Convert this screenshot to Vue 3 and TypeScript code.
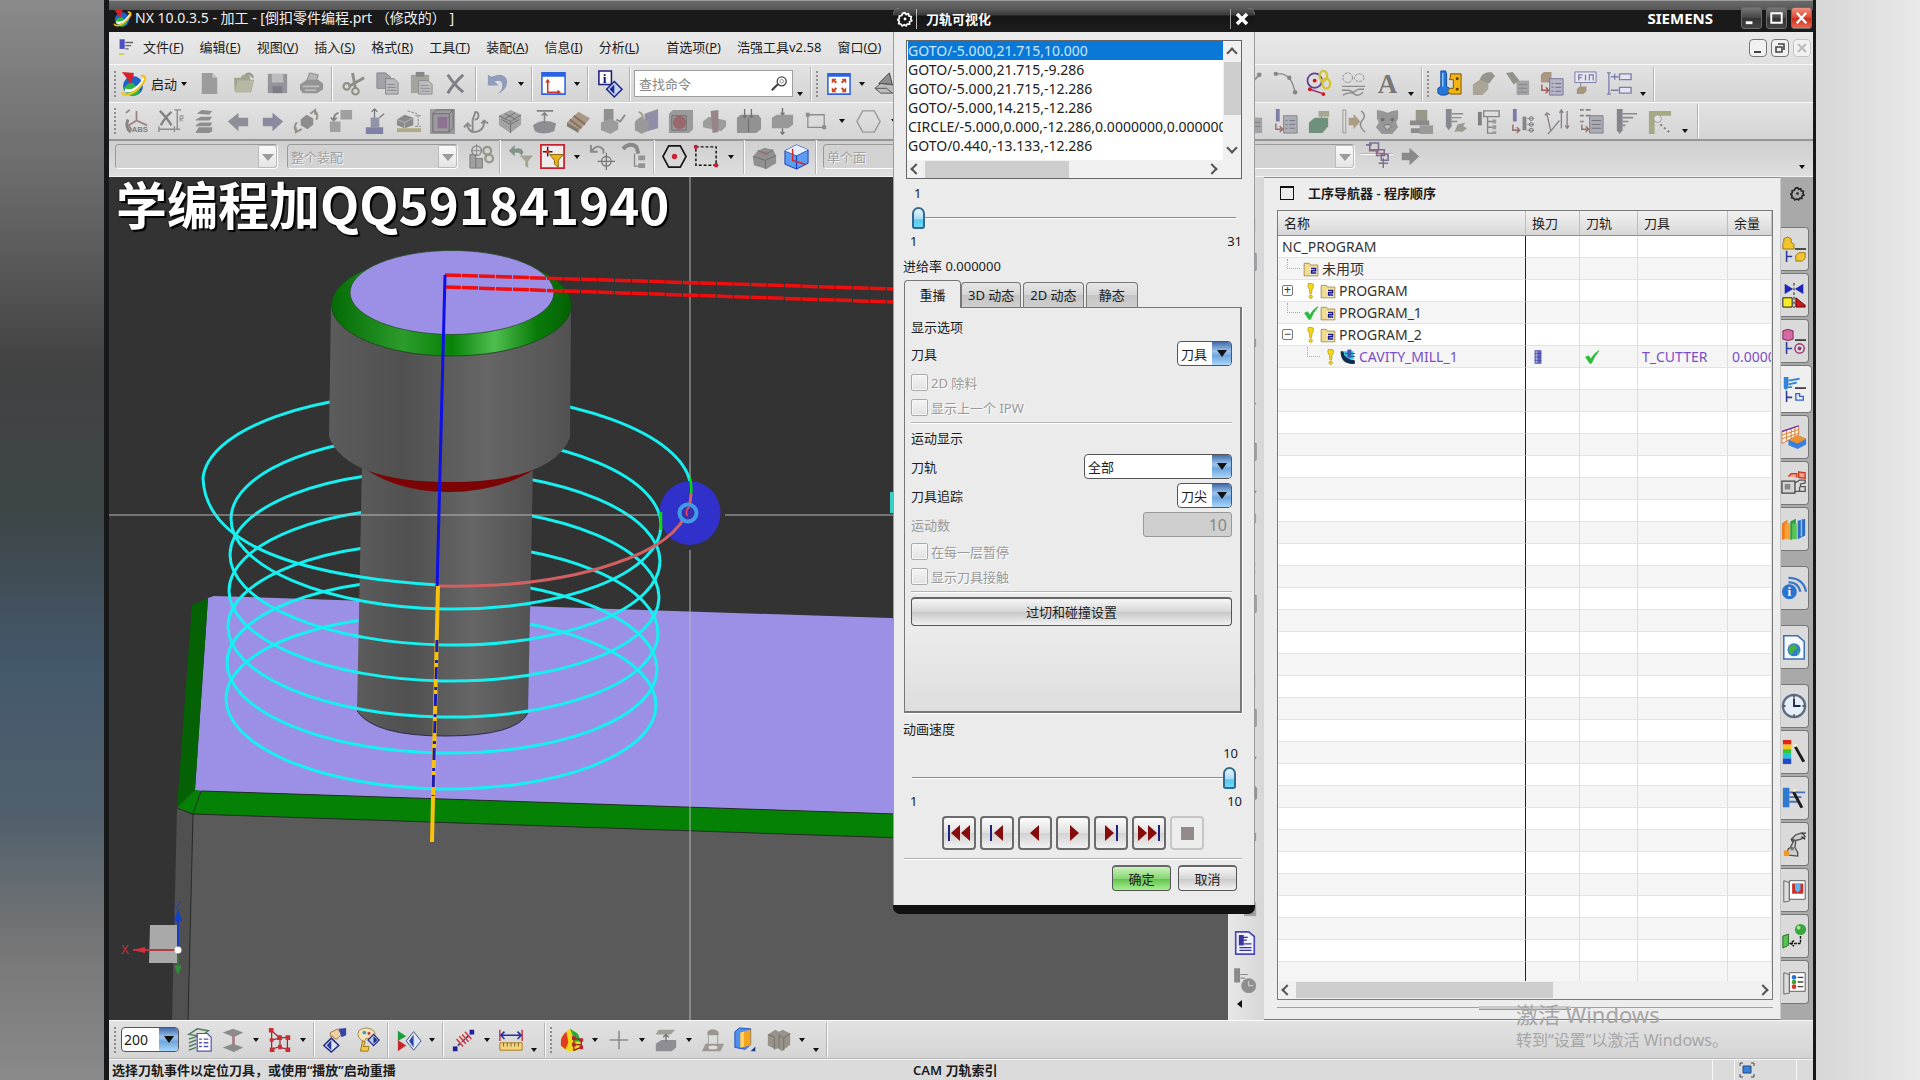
<script setup lang="ts">
import { ref } from 'vue'

interface Menu { text: string; key?: string; spaced?: boolean }
interface TreeRow { level: number; label: string; box?: '+' | '-'; mark?: string; icon?: string; purple?: boolean }
interface SideTab { icon: string; label: string; gap?: boolean; active?: boolean }

const menus: Menu[] = [
  { text: '文件', key: 'F' }, { text: '编辑', key: 'E' }, { text: '视图', key: 'V' },
  { text: '插入', key: 'S' }, { text: '格式', key: 'R' }, { text: '工具', key: 'T' },
  { text: '装配', key: 'A' }, { text: '信息', key: 'I' }, { text: '分析', key: 'L' },
  { text: '首选项', key: 'P', spaced: true }, { text: '浩强工具v2.58' }, { text: '窗口', key: 'O' },
]

// Toolbar notation: ":" grip, "|" separator, "v" drop-down arrow, "w" low overflow arrow, "~" stretch under the dialog
const bar1 = ': start file open save print | cut copy paste delete | undo v | csyswin v | info | search w | : fit v shade ~ line arc circles sketch letter w | : bolt grab pull boxlist fin dims w |'.split(' ')
const bar2 = ': abs xr stack left right rotate squares pillar boxdim cube anchor mesh lift slab drill corner pocket cross split slice rect v hex v ~ mill toollist greenbox mirror bear layers wrench tree toolpath axes treelist speed cornercut w |'.split(' ')
const bar3a = 'asm | refilter filter v undopt tree2 | hexpt dashrect v | greycube bluecube |'.split(' ')
const bar4 = 'sheets hourglass v nodes v | hand palette | play v | ribs v ruler w | : rainbow v plus v section v shadow orange books v w |'.split(' ')
const sideTools = 'mill toollist tree layers stack speed treelist axes squares tree2 toollist greenbox mill treelist axes split layers tree pull'.split(' ')

const gotoLines = [
  'GOTO/-5.000,21.715,10.000',
  'GOTO/-5.000,21.715,-9.286',
  'GOTO/-5.000,21.715,-12.286',
  'GOTO/-5.000,14.215,-12.286',
  'CIRCLE/-5.000,0.000,-12.286,0.0000000,0.0000000,1.0000000',
  'GOTO/0.440,-13.133,-12.286',
]
const selected = ref(0)
const frame = ref(1)
const speed = ref(10)

const tabs = ['重播', '3D 动态', '2D 动态', '静态']
const activeTab = ref(0)

const treeRows: TreeRow[] = [
  { level: 0, label: 'NC_PROGRAM' },
  { level: 1, label: '未用项', icon: 'folder' },
  { level: 1, label: 'PROGRAM', box: '+', mark: 'bang', icon: 'folder' },
  { level: 1, label: 'PROGRAM_1', mark: 'check', icon: 'folder' },
  { level: 1, label: 'PROGRAM_2', box: '-', mark: 'bang', icon: 'folder' },
  { level: 2, label: 'CAVITY_MILL_1', mark: 'bang', icon: 'cavity', purple: true },
]
const emptyRows = 28

const sideTabs: SideTab[] = [
  { icon: 'tAsm', label: '装配导航器' }, { icon: 'tCons', label: '约束导航器' },
  { icon: 'tPart', label: '部件导航器' }, { icon: 'tOper', label: '工序导航器', active: true },
  { icon: 'tMach', label: '加工特征' }, { icon: 'tTool', label: '机床导航器' },
  { icon: 'tLib', label: '重用库' }, { icon: 'tInfo', label: 'HD3D 工具', gap: true },
  { icon: 'tWeb', label: 'Web 浏览器', gap: true }, { icon: 'tClock', label: '历史记录', gap: true },
  { icon: 'tColor', label: '系统材料' }, { icon: 'tWiz', label: '加工向导' },
  { icon: 'tRobot', label: '角色' }, { icon: 'tScene', label: '系统场景' },
  { icon: 'tGreen', label: '流程' }, { icon: 'tRole', label: '可视化' },
]

const players = [
  { label: '后退到开头', d: 'first', off: false }, { label: '后退一步', d: 'prev', off: false },
  { label: '反向播放', d: 'back', off: false }, { label: '播放', d: 'fwd', off: false },
  { label: '前进一步', d: 'next', off: false }, { label: '前进到结尾', d: 'last', off: false },
  { label: '停止', d: 'stop', off: true },
]

const ringTops = [522, 558, 594, 630, 666, 702]

const icons: Record<string, string> = {
  nx: '<circle cx="14" cy="16" r="10" fill="#1d63c8"/><path d="M5 18q4-6 9-5l7 8q-3 6-9 5-5-2-7-8z" fill="#2fb545"/><path d="M6 20q10 4 20-12" fill="none" stroke="#fff" stroke-width="3"/><path d="M3 22q2 5 10 1T26 10q1-5-4-4" fill="none" stroke="#f1c31c" stroke-width="2.4"/><path d="M3 2l12 1-3 11z" fill="#d8202a"/>',
  file: '<path d="M6 3h11l5 5v17H6z" fill="#9c9c9c"/><path d="M17 3v5h5" fill="#c4c4c4"/>',
  open: '<path d="M4 8h7l2-3h8v5l4 0-3 13H5z" fill="#a3a592"/><path d="M8 11h17l-4 12H5z" fill="#b7b8a4"/><path d="M16 5q5-4 8 3" fill="none" stroke="#8f9285" stroke-width="2"/>',
  save: '<path d="M4 4h20v20H4z" fill="#94949a"/><path d="M8 4h12v9H8z" fill="#bdbdc1"/><path d="M9 17h10v7H9z" fill="#7d7d84"/>',
  print: '<path d="M9 11l3-8 9 2-2 7z" fill="#b4b4b4" stroke="#8c8c8c"/><path d="M2 15l7-5h12l5 4v6l-6 4H5l-3-4z" fill="#949494"/><path d="M5 17h17M7 21h12" stroke="#bebebe" stroke-width="1.6"/>',
  cut: '<path d="M9 17L25 8M16 19L13 3" stroke="#8e8e86" stroke-width="3"/><circle cx="7" cy="17" r="3.4" fill="none" stroke="#8e8e86" stroke-width="2.2"/><circle cx="16" cy="22" r="3.4" fill="none" stroke="#8e8e86" stroke-width="2.2"/>',
  copy: '<path d="M3 3h9l5 4v12H3z" fill="#a2a2a8" stroke="#858588"/><path d="M12 9h9l4 4v12H12z" fill="#b9b9be" stroke="#858588"/><path d="M14 15h8M14 18h9M14 21h9" stroke="#858588"/>',
  paste: '<path d="M3 5h19v19H3z" fill="#a4a49e"/><path d="M8 2h9v5H8z" fill="#878787"/><path d="M11 11h10l4 4v10H11z" fill="#bdbdbf" stroke="#8b8b8b"/><path d="M13 16h8M13 19h10M13 22h10" stroke="#8b8b8b"/>',
  delete: '<path d="M6 5q7 11 16 18M22 5Q12 14 6 24" stroke="#7f7f85" stroke-width="3" fill="none"/>',
  undo: '<path d="M4 5v11h11l-4-4q8-3 8 4 0 5-5 9 10-4 10-13-2-11-16-5z" fill="#8f9cba"/>',
  csyswin: '<path d="M2 3h24v22H2z" fill="#fff" stroke="#2f62e0" stroke-width="1.6"/><path d="M2 3h24v4H2z" fill="#2a62e6"/><path d="M8 11v12h12" fill="none" stroke="#c63a28" stroke-width="1.6"/><path d="M5.500 13L8 9l2.500 4zM18 20.500l4 2.500-4 2.500z" fill="#d42f1c"/>',
  info: '<path d="M3 1h13v14H3z" fill="#fff" stroke="#1d1d78" stroke-width="1.6"/><text x="7" y="13" font-family="Liberation Serif,serif" font-weight="bold" font-size="14" fill="#15156b">i</text><path d="M19 12l8 8-8 8-8-8z" fill="#c9d2f1" stroke="#1b2a8d" stroke-width="1.600"/><path d="M19 15v10l-5-5z" fill="#1b2a8d"/>',
  fit: '<path d="M3 4h23v21H3z" fill="#fff" stroke="#2f62e0" stroke-width="1.6"/><path d="M3 4h23v3H3z" fill="#2a62e6"/><path d="M7 9h5l-1.500 1.500 2 2-1.500 1.500-2-2L7 14zM22 9h-5l1.500 1.500-2 2 1.500 1.500 2-2L22 14zM7 23h5l-1.500-1.500 2-2-1.500-1.500-2 2L7 18zM22 23h-5l1.500-1.500-2-2 1.500-1.500 2 2L22 18z" fill="#d2431e"/>',
  shade: '<path d="M6 14L17 3l3 12z" fill="#8d8d8d" stroke="#444"/><path d="M2 19l6-5 17 2 2 5-7 3H8z" fill="#bbb" stroke="#555"/><path d="M2 19h12l6 5" fill="none" stroke="#555"/>',
  line: '<path d="M4 24L22 5" stroke="#909090" stroke-width="2"/><circle cx="22" cy="5" r="2.500" fill="#8a8a8a"/><circle cx="4" cy="24" r="2.500" fill="#8a8a8a"/>',
  arc: '<path d="M4 4h6q11 2 14 20" fill="none" stroke="#8b8b8b" stroke-width="1.5"/><circle cx="4" cy="4" r="2.300" fill="#858585"/><circle cx="18" cy="8" r="2.300" fill="#858585"/><circle cx="24" cy="23" r="2.300" fill="#858585"/>',
  circles: '<circle cx="9" cy="11" r="7.500" fill="none" stroke="#603a9d" stroke-width="1.800"/><circle cx="9" cy="11" r="2" fill="#c11"/><path d="M4 20l15 5" stroke="#9b2a66" stroke-width="1.500"/><circle cx="4" cy="20" r="2" fill="#d21c1c"/><circle cx="18" cy="25" r="2" fill="#d21c1c"/><ellipse cx="18" cy="6" rx="4" ry="5" fill="none" stroke="#d3c52e" stroke-width="2.400"/><ellipse cx="21" cy="14" rx="4" ry="5" fill="none" stroke="#d3c52e" stroke-width="2.400"/>',
  sketch: '<circle cx="8" cy="8" r="5" fill="none" stroke="#8c8c8c" stroke-dasharray="3 1"/><ellipse cx="20" cy="8" rx="5" ry="4" fill="none" stroke="#8c8c8c" stroke-dasharray="3 1"/><path d="M2 17h24M2 21h7l5 2 5-3 6 0M3 26q8-4 12-1t9-2" fill="none" stroke="#8c8c8c" stroke-width="1.400"/>',
  letter: '<text x="4" y="24" font-family="Liberation Serif,serif" font-size="28" font-weight="bold" fill="#777">A</text>',
  bolt: '<path d="M5 1h5l1 3v13l3 2v5l-4 2H5l-3-2v-5l3-2V2z" fill="#2377dd" stroke="#114b9c"/><path d="M7 3v14" stroke="#8ec8ff" stroke-width="1.500"/><path d="M15 4h11v21H15l-3-3 2-3h4v-9h-4l1-3z" fill="#f2b516" stroke="#7a5205"/><circle cx="22" cy="9" r="1.500" fill="#5c3c00"/><circle cx="22" cy="20" r="1.500" fill="#5c3c00"/>',
  grab: '<path d="M3 15l7-5h9v10l-6 6H3z" fill="#a8a596"/><path d="M10 10q2-8 12-8l4 4-6 8z" fill="#96948c"/>',
  pull: '<path d="M13 11h13v15H13z" fill="#a4a4a8"/><path d="M15 15h9M15 19h9M15 23h9" stroke="#828288"/><path d="M2 3l7-1 7 9-6 4z" fill="#92928a"/>',
  boxlist: '<path d="M3 5l3-3h8v8l-3 3H3z" fill="#aa9781"/><path d="M12 9h14v17H12z" fill="#b5b5c6" stroke="#77779c"/><path d="M14 14h2M18 14h6M14 18h2M18 18h6M14 22h2M18 22h6" stroke="#6b6b92"/><path d="M4 15v6h6M8 18l3 3-3 3" fill="none" stroke="#a05b5b" stroke-width="1.500"/>',
  fin: '<path d="M3 2h22v11H3z" fill="#e6e6ee" stroke="#7b7baa"/><path d="M7 11V5h4M7 8h3M14 5v6M18 11V5h4v6" fill="none" stroke="#7b7baa" stroke-width="1.300"/><path d="M9 13v5" stroke="#888"/><path d="M5 20l3-3h7v5l-3 3H5z" fill="#a5957c"/>',
  dims: '<path d="M3 3v22M1 3h4M1 25h4M5 7h8M5 21h8M9 4v6" stroke="#7e7eae" stroke-width="1.400" fill="none"/><path d="M14 4h12v6H14zM14 18h12v6H14z" fill="#e4e4ee" stroke="#7e7eae" stroke-width="1.400"/>',
  abs: '<path d="M3 5l4-3M14 3v10l11 5M14 13L6 18l3 5" fill="none" stroke="#9c8080" stroke-width="1.800"/><path d="M5 12q-3 9 3 13" fill="none" stroke="#858585" stroke-width="3"/><text x="9" y="25" font-family="Liberation Sans" font-size="8" font-weight="bold" fill="#808080">ABS</text>',
  xr: '<path d="M3 3q8 8 12 15M15 4Q8 10 4 18" stroke="#828282" stroke-width="2.400" fill="none"/><path d="M2 22h16M2 19v6M18 19v6M21 2v20M18 2h7M19 22h5" stroke="#8a8a8a" stroke-width="1.400"/><path d="M24 14V8h3v3h-3l3 3" fill="none" stroke="#8a8a8a"/>',
  stack: '<path d="M6 6l5-4 11 1-3 4zM5 12l5-3h12l-3 4H5zM5 18l4-3h13l-2 4H5zM5 25l3-5h14v4l-3 2H5z" fill="#8e8e8e"/>',
  left: '<path d="M3 14L14 5v5h10v9H14v5z" fill="#8e8e96"/>',
  right: '<path d="M25 14L14 5v5H4v9h10v5z" fill="#8a8aa0"/>',
  rotate: '<path d="M8 12l6-5 7 4v6l-6 5-7-4z" fill="#8c8c8c"/><path d="M18 6l5-4v5M23 3q4 5 1 9M9 22l-6 3v-5M3 24q-3-4 1-9" fill="none" stroke="#969088" stroke-width="2"/>',
  squares: '<path d="M14 2h12v10H14zM3 14h11v11H3z" fill="#a0a0a0"/><path d="M12 5q-5 1-5 7M4 10l3 3 3-3" fill="none" stroke="#828282" stroke-width="1.800"/>',
  pillar: '<path d="M5 20h18v7H5z" fill="#8080a4"/><path d="M10 10h9v10h-9z" fill="#9292a8"/><path d="M14 10V1M11 4l3-3 3 3M19 10l5-4" fill="none" stroke="#777" stroke-width="1.300"/>',
  boxdim: '<path d="M2 12l8-5 9 3v8l-9 3-8-3z" fill="#8a8a8a"/><path d="M2 12l8 3 9-5M10 15v6" stroke="#b5b5b5" fill="none"/><path d="M2 21h25v4H2z" fill="#b0aa84"/><path d="M13 3l10 3M24 7v12M21 8h6M21 19h6" stroke="#8b8b8b" stroke-dasharray="3 1" fill="none"/>',
  cube: '<path d="M1 1h26v26H1z" fill="#9d9aa0"/><path d="M4 6l4-4h17v19l-4 4H4zM4 6h17v19M21 6l4-4" fill="none" stroke="#6b6b6b"/><path d="M9 9h10v12H9z" fill="#8d7292"/>',
  anchor: '<path d="M12 12q4 0 4-4t-3-4l-3 8v12M4 17q2 8 8 8 10-1 10-11M1 20l4-4 3 3M19 16l3-3 4 3" fill="none" stroke="#8a8a8a" stroke-width="2"/>',
  mesh: '<path d="M2 8l12-6 11 5v10l-11 9-12-8z" fill="#a3a3a3"/><path d="M2 8l12 6 11-7M14 14v12M5 12l9 5 9-5M8 6l12 6M19 5L8 11" stroke="#6f6f6f" fill="none"/>',
  lift: '<path d="M2 18q10-8 24-2l-2 8q-12 5-20 0z" fill="#8d8d93"/><path d="M6 3h17M14 15V5M11 8l3-3 3 3" stroke="#828282" stroke-width="1.600" fill="none"/>',
  slab: '<path d="M2 15L14 4l12 7-12 13z" fill="#a79a84"/><path d="M9 8l12 9M5 12l12 9" stroke="#8c6c5e" stroke-width="2"/><path d="M2 15l12 7v4L2 19z" fill="#7f7a70"/>',
  drill: '<path d="M5 1h10v14H5z" fill="#909090"/><path d="M2 15l10-4 8 4v7l-8 5-10-4z" fill="#9c9c9c"/><path d="M18 12l4 2 5-7" fill="none" stroke="#8a8a8a" stroke-width="2"/>',
  corner: '<path d="M12 6l14-5v20l-14 4z" fill="#8f90a8"/><path d="M2 14l6-5 8 5v9l-7 4-7-4z" fill="#999"/><path d="M6 4q5 2 4 8" stroke="#a39c84" stroke-width="2" fill="none"/>',
  pocket: '<path d="M2 6l4-4h21v20l-4 4H2z" fill="#9a9a9a"/><path d="M5 8h15v15H5z" fill="none" stroke="#6f6f6f"/><circle cx="13" cy="15" r="7" fill="#97696f"/>',
  cross: '<path d="M2 14l6-5 18 4v6l-5 5-19-4z" fill="#9c9c9c"/><path d="M10 3l8-1v23l-6 1z" fill="#96868a"/>',
  split: '<path d="M2 10l4-3h18l3 4v11l-5 4H2z" fill="#929292"/><path d="M10 1v9M17 1v9M8 8l2 2 2-2M15 8l2 2 2-2M14 11v14" stroke="#747474" stroke-width="1.400" fill="none"/>',
  slice: '<path d="M3 10l5-3h17v10l-5 4H3z" fill="#999"/><path d="M14 0v7M12 5l2 2 2-2M14 21v7M12 25l2 2 2-2" stroke="#777" stroke-width="1.500" fill="none"/>',
  rect: '<path d="M5 7h17v13H5z" fill="none" stroke="#8d8d8d" stroke-width="1.300"/><path d="M3 5h4v4H3zM20 18h4v4h-4z" fill="#8d8d8d"/>',
  hex: '<path d="M8 3h12l6 11-6 11H8L2 14z" fill="none" stroke="#9a9a9a" stroke-width="1.500"/>',
  mill: '<path d="M4 2h5v14H4z" fill="#8484a0"/><path d="M12 10h13v16H12z" fill="#a2a2a8"/><path d="M14 15h9M14 19h9" stroke="#808086"/>',
  toollist: '<path d="M4 1h4v13H4z" fill="#7e7ea8"/><path d="M12 8h14v18H12z" fill="#adadb6" stroke="#83838c"/><path d="M14 13h2M18 13h6M14 17h2M18 17h6M14 21h2M18 21h6" stroke="#75757e"/><path d="M4 16v6h6M8 19l3 3-3 3" fill="none" stroke="#986e6e" stroke-width="1.500"/>',
  greenbox: '<path d="M3 15l6-5h14v9l-6 7H3z" fill="#70907e"/><path d="M13 3h11v6H13z" fill="#a9a594"/><path d="M16 9v5" stroke="#888"/>',
  mirror: '<path d="M3 2h3v24H3z" fill="none" stroke="#999"/><path d="M9 10h5V6l7 8-7 8v-4H9z" fill="#ab9d84"/><path d="M22 3q6 5 1 10t3 12" fill="none" stroke="#8a8a8a" stroke-width="1.500"/>',
  bear: '<path d="M3 2l6 1 5 2 5-2 6-1v9l-2 4 2 5-6 7H8l-6-7 3-5-2-4z" fill="#979797"/><circle cx="9" cy="12" r="2" fill="#707070"/><circle cx="19" cy="12" r="2" fill="#707070"/><path d="M10 19q4-4 8 0l-4 4z" fill="#bdbdbd" stroke="#707070"/>',
  layers: '<path d="M8 2h12v13H8z" fill="#98988a"/><path d="M2 13h20v5H2zM3 21h12v5H3z" fill="#8a8a8a"/><path d="M12 18h14v9H12z" fill="#9a9a98"/>',
  wrench: '<path d="M4 1h6v18l-3 4-3-4z" fill="#888890"/><path d="M10 6h12M10 10h10M10 14h6" stroke="#8c8c8c" stroke-width="1.500"/><path d="M13 25l3-8 8-2-2 4 4 2-5 4-4-1z" fill="#9a9a92"/>',
  tree: '<path d="M2 4h4v14H2z" fill="#808080"/><path d="M8 3h16v6H8zM12 9v17h6M12 14h5M12 20h5" fill="none" stroke="#858585" stroke-width="1.400"/><path d="M17 12h4v4h-4zM17 18h4v4h-4zM17 24h4v3h-4z" fill="#9a9a9a"/>',
  toolpath: '<path d="M3 1h4v13H3z" fill="#7c7ca6"/><path d="M3 17v6h6M7 20l3 3-3 3" fill="none" stroke="#946c6c" stroke-width="1.500"/><path d="M13 9h4v14h-4z" fill="#84848c"/><path d="M18 11h7M18 17h7M18 23h7" stroke="#85858c"/><circle cx="22" cy="11" r="2" fill="none" stroke="#777"/><circle cx="22" cy="17" r="2" fill="none" stroke="#777"/><circle cx="22" cy="23" r="2" fill="none" stroke="#777"/>',
  axes: '<path d="M3 6l4 18M7 24L16 13M7 24l-3 3M18 3v18M24 3v18M16 5l2-3 2 3M22 18l2 3 2-3M1 8l2-3 3 2" fill="none" stroke="#8c8088" stroke-width="1.400"/>',
  treelist: '<path d="M2 2h4M2 8h4M2 14h4M8 2h5M8 8h5" stroke="#858585" stroke-width="1.800"/><path d="M12 8h14v18H12z" fill="#acacb6" stroke="#80808a"/><path d="M14 13h10M14 17h10M14 21h10" stroke="#74747e"/><path d="M4 17v5h6M8 19l3 3-3 3" fill="none" stroke="#986e6e" stroke-width="1.500"/>',
  speed: '<path d="M5 1h6v22l-3 4-3-4z" fill="#84848c"/><path d="M11 6h15M11 10h11M11 14h6M11 18h3" stroke="#8a8a8a" stroke-width="1.700"/>',
  cornercut: '<path d="M3 3h23v5H14l-5 4v15H3z" fill="#a6a984"/><circle cx="12" cy="11" r="4" fill="#e0e0e0" stroke="#999"/><path d="M15 17l9 8" stroke="#777" stroke-dasharray="2 3" stroke-width="2"/>',
  asm: '<path d="M3 12h6v14H3zM9 16h7v10H9z" fill="#a0a0a0" stroke="#7d7d7d"/><circle cx="10" cy="8" r="5" fill="none" stroke="#888" stroke-width="1.400"/><path d="M10 1v12M4 8h11" stroke="#888"/><circle cx="21" cy="8" r="4" fill="none" stroke="#96968a" stroke-width="2.400"/><circle cx="23" cy="16" r="4" fill="none" stroke="#96968a" stroke-width="2.400"/>',
  refilter: '<path d="M2 8l6-6v4q8-2 9 4l-2 3q-2-4-7-3v4z" fill="#82948c"/><path d="M13 13h14l-5 6v7l-3-2v-5z" fill="#a6a392"/>',
  filter: '<path d="M2 2h24v24H2z" fill="#f1ecec" stroke="#c8202c" stroke-width="1.800"/><path d="M9 4v10M4 9h10" stroke="#222" stroke-width="1.500"/><circle cx="9" cy="9" r="2" fill="#c33"/><path d="M11 12h14l-5 6v7l-4-3v-4z" fill="#eab41e" stroke="#8a6205"/>',
  undopt: '<path d="M2 2v7h7M3 8q6-8 12-1v4" fill="none" stroke="#8a8a8a" stroke-width="2"/><circle cx="18" cy="19" r="5" fill="none" stroke="#777" stroke-width="1.300"/><path d="M18 10v18M9 19h18" stroke="#777" stroke-width="1.300"/>',
  tree2: '<path d="M2 6q7-7 14-2l2 7" fill="none" stroke="#888" stroke-width="4"/><path d="M14 11v13h5" fill="none" stroke="#888" stroke-width="1.400"/><path d="M18 13h7v5h-7zM18 21h7v5h-7z" fill="#949494"/>',
  hexpt: '<path d="M8 3h12l6 11-6 11H8L2 14z" fill="none" stroke="#161616" stroke-width="1.700"/><circle cx="14" cy="14" r="2.800" fill="#cf2430"/>',
  dashrect: '<path d="M3 4h21v19H3z" fill="none" stroke="#111" stroke-width="1.500" stroke-dasharray="3 2"/><circle cx="3" cy="4" r="2.300" fill="#c22036"/><circle cx="24" cy="23" r="2.300" fill="#c22036"/>',
  greycube: '<path d="M2 14l5-6 7-3 9 2 3 6v8l-10 6-13-4z" fill="#909090"/><path d="M2 14l13 4 11-5M15 18v9M7 8l10 3 6-4" fill="none" stroke="#6f6f6f"/><path d="M9 9l8 3" stroke="#a06f6f" stroke-width="1.500"/>',
  bluecube: '<path d="M2 8l12-6 12 5v14l-12 6-12-5z" fill="#5c9df2" stroke="#1d3fb5"/><path d="M2 8l12 5 12-6M14 13v14" fill="none" stroke="#1d3fb5" stroke-width="1.300"/><path d="M2 8l12-6 12 5-12 6z" fill="#fff" opacity=".85"/><path d="M10 6v12l13 4" fill="none" stroke="#d62727" stroke-width="1.500"/>',
  spline: '<path d="M2 4h6M6 2h9v8H6zM13 9h8v6h-8zM18 14h7v6h-7z" fill="none" stroke="#7c6c94" stroke-width="1.600"/><path d="M5 9h9v4h8" fill="none" stroke="#a26868" stroke-width="1.500"/><path d="M20 18v10M15 23h10" stroke="#777" stroke-width="1.500"/>',
  go: '<path d="M24 14L14 5v5H6v8h8v5z" fill="#8a8a8a"/>',
  sheets: '<path d="M2 8l9-6 12 2-8 6zM2 13l9-3M2 17l8-3M2 21l8-3M2 25l8-3" fill="none" stroke="#4c7c5c" stroke-width="1.500"/><path d="M11 7h11l4 4v15H11z" fill="#fff" stroke="#5550b0" stroke-width="1.300"/><path d="M13 13h3M18 13h5M13 17h3M18 17h5M13 21h3M18 21h5" stroke="#5550b0" stroke-width="1.500"/>',
  hourglass: '<path d="M3 6l11-4 11 4-10 5zM3 22l11-4 11 4-10 5z" fill="#8b8b8b"/><path d="M13 9h3v10h-3z" fill="#a77f83"/>',
  nodes: '<path d="M5 4v20M5 4l9 8M5 24l9-3M14 12v10l8 2M14 12l8-1v13M5 14l9-2" fill="none" stroke="#8f2930" stroke-width="1.300"/><path d="M2 1h5v5H2zM11 9h5v5h-5zM20 9h5v5h-5zM3 12h4v4H3zM3 22h5v5H3zM12 19h4v5h-4zM20 22h5v5h-5z" fill="#c92c34"/>',
  hand: '<path d="M10 12l8 8-8 7-8-7z" fill="#dfe5fa" stroke="#1f2c80" stroke-width="1.600"/><path d="M10 14v11l-5-5z" fill="#2b3c9e"/><path d="M9 6l8-4 4 6-5 5q-4 0-4-3l-3 0z" fill="#f0cf9d" stroke="#99764a"/><path d="M18 2l8-1v8l-5 2z" fill="#3445a8"/>',
  palette: '<path d="M4 4q8-6 16 0 4 5-2 9l-6-1-2 4q-9-4-6-12z" fill="#f7e3bb" stroke="#a28340"/><circle cx="10" cy="6" r="2" fill="#2d9fd8"/><circle cx="15" cy="7" r="1.600" fill="#d33"/><path d="M20 8l6 6-6 6-6-6z" fill="#b9c5ef" stroke="#1f2c80" stroke-width="1.300"/><path d="M20 10v8l4-4z" fill="#1f2c80"/><path d="M8 15l3 1-2 5h6l-1 5H6z" fill="#f1c94a" stroke="#9a7718"/>',
  play: '<path d="M2 4l9 6-9 5z" fill="#1b9e3a"/><path d="M2 14l9 6-9 6z" fill="#c6272d"/><path d="M19 5l8 10-8 10-8-10z" fill="#dfe8fa" stroke="#3a4b80"/><path d="M19 8v14l-5-7z" fill="#2d49a6"/>',
  ribs: '<path d="M3 24L25 4" stroke="#1d2298" stroke-width="1.500" stroke-dasharray="4 2"/><path d="M6 13l7 8M9 10l7 8M12 8l7 8M15 5l7 8" stroke="#d5343a" stroke-width="1.600"/><path d="M2 21h5v5H2zM20 3h5v5h-5z" fill="#1d2298"/>',
  ruler: '<path d="M2 3v12M26 3v12" stroke="#d5343a" stroke-width="1.600"/><path d="M3 9h22M7 5L3 9l4 4M21 5l4 4-4 4" fill="none" stroke="#1f2fa6" stroke-width="1.600"/><path d="M2 17h24v8H2z" fill="#f3d57c" stroke="#a57a24"/><path d="M6 17v4M10 17v4M14 17v4M18 17v4M22 17v4" stroke="#805c14"/>',
  rainbow: '<path d="M2 20Q1 8 12 2l8 5 4 8-4 10q-12 4-18-5z" fill="#f2d51d"/><path d="M12 2l8 5 4 8-7 1z" fill="#2eaa36"/><path d="M2 20Q1 10 8 5l2 12-3 7z" fill="#e23a1d"/><path d="M16 12v13l8-3M16 12l8 2v8M16 19h8" fill="none" stroke="#97262b" stroke-width="1.400"/><path d="M14 10h4v4h-4zM22 12h4v4h-4zM14 17h4v4h-4zM22 20h4v4h-4z" fill="#b02a30"/>',
  plus: '<path d="M14 4v20M4 14h20" stroke="#8c8c8c" stroke-width="1.700"/>',
  section: '<path d="M6 3h18l-5 5H3z" fill="#9f9f96"/><path d="M3 18l6-4h16v8l-5 4H3z" fill="#8e8e94"/><path d="M14 16V8M11 11l3-3 3 3" fill="none" stroke="#777" stroke-width="1.500"/>',
  shadow: '<path d="M8 5q5-5 12 0v4H8z" fill="#9a968c"/><path d="M9 9v11M19 9v11" stroke="#9a9a9a"/><path d="M6 18h20l-4 8H2z" fill="#9e9a92"/><ellipse cx="14" cy="22" rx="5" ry="2" fill="#ddd"/>',
  orange: '<path d="M2 5l5-4 12 1v17l-6 5-11-2z" fill="#4f8ff0" stroke="#1e4fb8"/><path d="M8 6l11-3v17l-11 2z" fill="#f8a41a"/><path d="M8 6l4-1v16l-4 1z" fill="#ffd36b"/><path d="M24 21v5h-5z" fill="#1b3a86"/>',
  books: '<path d="M2 8l8-5 4 2 4-2 8 4v12l-9 7-4-3-3 1-8-4z" fill="#97938a"/><path d="M2 8l7 3v13M14 8v15M14 9l5 3v13M26 7l-7 5" fill="none" stroke="#7b776e" stroke-width="1.200"/>',
  doc: '<path d="M4 2h14l6 5v19H4z" fill="#f1f1fb" stroke="#4b48b4" stroke-width="1.800"/><path d="M8 6h4v10H8zM12 8h5M12 11h4" fill="#39379b" stroke="#39379b" stroke-width="1.300"/><path d="M13 15h8M8 19h13M8 22h13" stroke="#39379b" stroke-width="1.400"/>',
  toolclock: '<path d="M3 1h5v14H3zM9 7h8M9 11h5" fill="#8a8a8a" stroke="#8a8a8a" stroke-width="1.300"/><circle cx="18" cy="19" r="8" fill="#8e8e8e"/><path d="M18 14v5h5" fill="none" stroke="#c8c8c8" stroke-width="1.300"/>',
  folder: '<path d="M2 4h9l2 3h13v19H2z" fill="#f0dd92" stroke="#9b8a4c" stroke-width="1.500"/><path d="M12 11h12v13H12z" fill="#eee" /><path d="M14 13h8v4h-7v4h8" fill="none" stroke="#1a1a8c" stroke-width="2.600"/>',
  bang: '<path d="M9 1q5-2 9 1 2 4-2 9l-1 8h-3l-1-8q-4-5-2-10z" fill="#f5d619" stroke="#a1890d"/><circle cx="13.500" cy="24" r="3" fill="#f5d619" stroke="#a1890d"/>',
  check: '<path d="M3 14l5-2 4 6Q17 8 26 3q-9 11-13 22h-3z" fill="#2dbb3a" stroke="#2dbb3a" stroke-width="1.500"/>',
  cavity: '<path d="M1 4h5q1 13 20 16v6Q1 28 1 4z" fill="#122c4c"/><path d="M6 4h18v15Q8 18 6 4z" fill="#35c8e4"/><path d="M13 1h7v14h-7z" fill="#3d55b4"/><path d="M9 8h4M20 8h6M20 13h6" stroke="#1b2f85" stroke-width="1.500"/>',
  cutter: '<path d="M8 2h12v24H8z" fill="#5f63b8"/><path d="M10 4h3v20h-3z" fill="#a9ace8"/><path d="M8 8h12M8 14h12M8 20h12" stroke="#3a3e93"/>',
  tAsm: '<path d="M3 3l4-2 4 2v4l3 2v5H2V8l1-1z" fill="#f1c52e" stroke="#99750c"/><path d="M16 21l3-3h7v6l-3 3h-7z" fill="#f1c52e" stroke="#99750c"/><path d="M15 14h12" stroke="#111" stroke-width="1.500"/><path d="M6 16v12M6 22h6" stroke="#2c3d9c" stroke-width="1.700" fill="none"/>',
  tCons: '<path d="M4 2v11l9-5.500zM24 2v11l-9-5.500z" fill="#1c25b8"/><path d="M14 1v27" stroke="#111" stroke-dasharray="3 2"/><path d="M2 17h10v10H2z" fill="#f6ec27" stroke="#111"/><path d="M16 17l10 8v2H16z" fill="#c51b20" stroke="#600"/>',
  tPart: '<path d="M2 3q5-3 11 0v9q-5 3-11 0z" fill="#d36aa2" stroke="#7a2456"/><path d="M15 13h12" stroke="#111" stroke-width="1.500"/><path d="M6 15v13M6 22h6" stroke="#2c3d9c" stroke-width="1.700"/><circle cx="20" cy="22" r="5" fill="none" stroke="#9c2e70" stroke-width="1.500"/><circle cx="20" cy="22" r="2" fill="#9c2e70"/>',
  tOper: '<path d="M3 1h5v12l-3 2-2-2z" fill="#3285d8"/><path d="M8 5l12-2M8 9l9-2M8 12h4" stroke="#3285d8" stroke-width="2"/><path d="M15 13h12" stroke="#111" stroke-width="1.500"/><path d="M6 16v12M6 23h6" stroke="#2c3d9c" stroke-width="1.700"/><path d="M16 19h4v3h4v4h-8z" fill="none" stroke="#2c62c8" stroke-width="1.400"/>',
  tMach: '<path d="M1 8l18-6v10L1 21z" fill="#fff2df" stroke="#d77b38"/><path d="M1 12l18-6M1 16l18-6M6 6v13M11 5v12M15 3v12" stroke="#d77b38"/><path d="M1 8l18-6" stroke="#6f3cc0" stroke-width="1.600"/><path d="M8 17l10-5 9 4v6l-9 5-10-4z" fill="#3a80e0"/><path d="M8 17l10-5 9 4-9 5z" fill="#f0922a"/>',
  tTool: '<path d="M1 12h14v13H1z" fill="#d5d5d5" stroke="#444" stroke-width="1.400"/><path d="M4 15h6v6H4z" fill="#888"/><path d="M8 7l3-3h6v4M19 2l7 1v6l-7-1z" fill="#f2a08a" stroke="#c5351c" stroke-width="1.400"/><path d="M15 14l5-3h6v3l-5 1v3h5v5h-11M20 18v5" stroke="#555" stroke-width="1.400" fill="none"/>',
  tLib: '<path d="M1 8l6-4v19l-6 3z" fill="#ef7d1c"/><path d="M4 8h6v17H4z" fill="#f8a13c"/><path d="M10 6l6-3v20l-6 3z" fill="#2c9e3c"/><path d="M12 8h5v17h-5z" fill="#58c25a"/><path d="M18 5l8-2v18l-8 4z" fill="#2b6cc6"/><path d="M22 4v18" stroke="#9bc4f5" stroke-width="1.500"/>',
  tInfo: '<circle cx="9" cy="18" r="8" fill="#2a73cf"/><text x="7" y="23" font-family="Liberation Serif,serif" font-weight="bold" font-size="14" fill="#fff">i</text><path d="M8 8q10-1 13 10M8 3q16 0 19 15" fill="none" stroke="#3f78c2" stroke-width="2.400"/>',
  tWeb: '<path d="M3 2h15l7 6v19H3z" fill="#f7faff" stroke="#3d6fb8" stroke-width="1.600"/><circle cx="14" cy="17" r="7" fill="#2f7fd0"/><path d="M9 13l6-2 3 4-4 3-3 5-3-4zM17 19l3-1-2 4z" fill="#45b04a"/>',
  tClock: '<circle cx="14" cy="14" r="12" fill="#e6eefa" stroke="#5e6c80" stroke-width="2.400"/><path d="M14 6v8h7" fill="none" stroke="#1d2a4a" stroke-width="2"/><path d="M14 3v2M14 23v2M3 14h2M23 14h2" stroke="#333" stroke-width="1.500"/>',
  tColor: '<path d="M2 1h9v5H2z" fill="#e2231a"/><path d="M2 6h9v5H2z" fill="#f6c51a"/><path d="M2 11h9v5H2z" fill="#39c43a"/><path d="M2 16h9v5H2z" fill="#20c3d8"/><path d="M2 21h9v6H2z" fill="#1f49d0"/><path d="M14 9l9 16 3-1-9-16z" fill="#1b1b1b"/><path d="M12 2l2 4 4-1-3 4" fill="#fff6b0"/>',
  tWiz: '<path d="M2 3h7v21H2z" fill="#2e7ad0"/><path d="M9 8h17M9 13h13M9 18h9" stroke="#4a6fb4" stroke-width="2"/><path d="M12 8l9 17 3-1-9-17z" fill="#1b1b1b"/><path d="M11 1l2 4 4-1-3 4" fill="#fff6b0"/>',
  tRobot: '<path d="M8 26q-3-6 2-8l3-6-2-3 5-5 7-2 3 4-5 3-5 1-1 8 3 5v4z" fill="#cfcfcf" stroke="#4d4d4d" stroke-width="1.400"/><circle cx="13" cy="10" r="2" fill="#555"/><circle cx="12" cy="19" r="2" fill="#777"/><path d="M3 21h6v6H3z" fill="#ee9a28"/><path d="M22 6l4 3M22 3l5-1" stroke="#444" stroke-width="1.500"/>',
  tScene: '<path d="M3 4l6 2v20l-6 1z" fill="#ddd" stroke="#666"/><path d="M9 4h17v20H9z" fill="#fff" stroke="#555"/><path d="M12 7h12v11H12z" fill="#ce2b22"/><path d="M15 7h6v7l-3 3-3-3z" fill="#5fb3ef"/>',
  tGreen: '<circle cx="21" cy="7" r="6" fill="#3aa53a"/><circle cx="19" cy="5" r="2" fill="#a9e59b"/><path d="M2 14l6-2v12l-6 3z" fill="#5bc256" stroke="#1d6c1d"/><path d="M21 14v8H11M14 19l-4 3 4 3" fill="none" stroke="#111" stroke-width="1.500" stroke-dasharray="3 1"/>',
  tRole: '<path d="M3 4l6 2v20l-6 1z" fill="#ddd" stroke="#666"/><path d="M9 4h17v20H9z" fill="#fff" stroke="#555"/><circle cx="14" cy="9" r="2.500" fill="#2e6fd6"/><circle cx="14" cy="14" r="2.500" fill="#34a83a"/><circle cx="14" cy="19" r="2.500" fill="#d5342c"/><path d="M18 9h6M18 14h6M18 19h6" stroke="#444" stroke-width="1.400"/>',
  gear: '<path d="M14 3l2 3 4-1 1 4 4 1-1 4 2 3-4 2v4l-4 0-2 3-3-2-4 2-2-3-4-1 1-4-3-3 3-2 0-4 4-1 2-4z" fill="none" stroke="currentColor" stroke-width="3"/><circle cx="14" cy="14" r="2.500" fill="currentColor"/>',
  first: '<path d="M4 6v16" stroke="#1d2180" stroke-width="2"/><path d="M15 6v16l-9-8zM25 6v16l-9-8z" fill="#860c0c"/>',
  prev: '<path d="M8 6v16" stroke="#1d2180" stroke-width="2"/><path d="M20 6v16l-9-8z" fill="#860c0c"/>',
  back: '<path d="M18 6v16l-9-8z" fill="#860c0c"/>',
  fwd: '<path d="M11 6v16l9-8z" fill="#860c0c"/>',
  next: '<path d="M8 6v16l9-8z" fill="#860c0c"/><path d="M20 6v16" stroke="#1d2180" stroke-width="2"/>',
  last: '<path d="M3 6v16l9-8zM13 6v16l9-8z" fill="#860c0c"/><path d="M24 6v16" stroke="#1d2180" stroke-width="2"/>',
  stop: '<path d="M8 8h13v13H8z" fill="#948a8c"/>',
  tool: '<path d="M4 2h8v15H4z" fill="#4c50c0"/><path d="M13 7h12M13 12h9M13 17h5" stroke="#666" stroke-width="2"/><path d="M3 25h8" stroke="#d8cf4c" stroke-width="3"/>',
}
</script>

<template>
  <div class="desktop">
    <main class="window">
      <header class="titlebar">
        <svg class="logo" viewBox="0 0 28 28" v-html="icons.nx" />
        <h1>NX 10.0.3.5 - 加工 - [倒扣零件编程.prt （修改的） ]</h1>
        <strong class="brand">SIEMENS</strong>
        <div class="winbtns">
          <button aria-label="最小化"><svg viewBox="0 0 20 20"><path d="M4 14h7v3H4z" fill="#fff" /></svg></button>
          <button aria-label="最大化"><svg viewBox="0 0 20 20"><path d="M4.500 5.500h11v10h-11z" fill="none" stroke="#fff" stroke-width="2" /></svg></button>
          <button class="red" aria-label="关闭"><svg viewBox="0 0 20 20"><path d="M5 5l10 11M15 5L5 16" stroke="#fff" stroke-width="2.500" /></svg></button>
        </div>
      </header>

      <nav class="menubar">
        <svg class="menuicon" viewBox="0 0 28 28" v-html="icons.tool" />
        <button v-for="m in menus" :key="m.text" :class="{ spaced: m.spaced }">{{ m.text }}<template v-if="m.key">(<u>{{ m.key }}</u>)</template></button>
        <div class="mdi">
          <button aria-label="最小化子窗口"><svg viewBox="0 0 16 16"><path d="M4 11h7v2H4z" fill="#444" /></svg></button>
          <button aria-label="还原子窗口"><svg viewBox="0 0 16 16"><path d="M4 7h6v5H4zM6 4h6v6" fill="none" stroke="#444" stroke-width="1.600" /></svg></button>
          <button aria-label="关闭子窗口" disabled><svg viewBox="0 0 16 16"><path d="M4 4l8 8M12 4l-8 8" stroke="#bbb" stroke-width="2" /></svg></button>
        </div>
      </nav>

      <div v-for="(bar, b) in [bar1, bar2]" :key="b" class="bar" :class="{ second: b === 1 }">
        <template v-for="(t, i) in bar" :key="i">
          <i v-if="t === ':'" class="grip" />
          <i v-else-if="t === '|'" class="sep" />
          <i v-else-if="t === '~'" class="behind" />
          <button v-else-if="t === 'v' || t === 'w'" class="drop" :class="{ low: t === 'w' }" aria-label="更多"><i /></button>
          <button v-else-if="t === 'start'" class="start"><svg viewBox="0 0 28 28" v-html="icons.nx" />启动<i /></button>
          <label v-else-if="t === 'search'" class="search">
            <input type="text" placeholder="查找命令" aria-label="查找命令">
            <svg viewBox="0 0 20 20"><circle cx="13" cy="7" r="5" fill="none" stroke="#444" stroke-width="1.500" /><circle cx="13" cy="7" r="2" fill="none" stroke="#888" /><path d="M9 10l-7 7" stroke="#444" stroke-width="2.500" /></svg>
          </label>
          <button v-else class="tool" :aria-label="t"><svg viewBox="0 0 28 28" v-html="icons[t]" /></button>
        </template>
      </div>

      <div class="bar third">
        <span class="dimsel type"><select disabled aria-label="类型过滤器"><option></option></select><i /></span>
        <span class="dimsel scope"><select disabled aria-label="选择范围"><option>整个装配</option></select><i /></span>
        <template v-for="(t, i) in bar3a" :key="i">
          <i v-if="t === '|'" class="sep" />
          <button v-else-if="t === 'v'" class="drop" aria-label="更多"><i /></button>
          <button v-else class="tool" :aria-label="t"><svg viewBox="0 0 28 28" v-html="icons[t]" /></button>
        </template>
        <span class="dimsel face"><select disabled aria-label="面规则"><option>单个面</option></select><i /></span>
        <button class="tool wide" aria-label="spline"><svg viewBox="0 0 28 28" v-html="icons.spline" /></button>
        <button class="tool" aria-label="go"><svg viewBox="0 0 28 28" v-html="icons.go" /></button>
        <button class="drop low end" aria-label="更多"><i /></button>
      </div>

      <section class="work">
        <div class="viewport">
          <svg class="scene" viewBox="109 177 1119 843" preserveAspectRatio="xMinYMin slice">
            <defs>
              <linearGradient id="steel"><stop offset="0" stop-color="#5c5c5c" /><stop offset=".3" stop-color="#505050" /><stop offset=".65" stop-color="#666" /><stop offset="1" stop-color="#525252" /></linearGradient>
              <linearGradient id="rim"><stop offset="0" stop-color="#046b04" /><stop offset=".3" stop-color="#2c9c2c" /><stop offset=".5" stop-color="#078307" /><stop offset=".68" stop-color="#4fbe4f" /><stop offset=".85" stop-color="#0a7d0a" /><stop offset="1" stop-color="#046004" /></linearGradient>
              <clipPath id="front"><path d="M356 475H533L529 740H356z" /></clipPath>
            </defs>
            <path d="M109 177h1119v843H109z" fill="#333" />
            <path d="M177 808l16 7-5 205h-16z" fill="#505050" />
            <path d="M193 814L1228 849v171H188z" fill="#5a5a5a" />
            <path d="M208 598l6-2 1014 33v196L201 791l-6-1z" fill="#9b90e6" />
            <path d="M208 598L192 605 177 808l18-18z" fill="#046204" />
            <path d="M195 790l6 1L1228 825v24L193 814l-16-6z" fill="#058205" />
            <path d="M201 791l-8 23-16-6M193 814L1228 849M201 791L1228 825M193 814l-5 206" fill="none" stroke="#272c27" />
            <g fill="none" stroke="#16f0f0" stroke-width="3">
              <ellipse v-for="(y, i) in ringTops" :key="y" :cx="446 - i" :cy="y" rx="215" ry="87" :transform="`rotate(1 446 ${y})`" />
              <path d="M690 482A244 93 1 0 0 203 478Q206 570 438 585" />
            </g>
            <path d="M362 465L357 711Q374 736 445 736T528 713L533 465z" fill="url(#steel)" />
            <path d="M357 711Q374 736 445 736T528 713" fill="none" stroke="#2e2a50" />
            <path d="M352 459q38 33 96 33t99-31z" fill="#7c0404" />
            <path d="M331 305L329 437q18 45 120 45t121-44l1-133z" fill="url(#steel)" />
            <ellipse cx="451.500" cy="305" rx="120" ry="51" fill="url(#rim)" stroke="#1c421c" stroke-width=".8" />
            <ellipse cx="452" cy="292.500" rx="102" ry="42" fill="#9b90e6" stroke="#274a27" stroke-width=".8" />
            <g clip-path="url(#front)" fill="none" stroke="#16f0f0" stroke-width="3">
              <path v-for="(y, i) in ringTops" :key="y" :d="`M${231 - i} ${y - 4}A215 87 1 0 0 ${661 - i} ${y + 4}`" />
              <path d="M203 478Q206 570 438 585" />
            </g>
            <path d="M690 177V481M690 550V1020M109 515H658M725 515H893" stroke="#b8b8b8" fill="none" />
            <ellipse cx="690" cy="513" rx="30.500" ry="32" fill="#3030cb" />
            <path d="M690 478q2 8 1 16M661 512v18" stroke="#0bd80b" stroke-width="2.500" fill="none" />
            <path d="M691 494q-1 45-78 70-70 24-175 22" fill="none" stroke="#d25f62" stroke-width="3" />
            <circle cx="688" cy="513" r="8.500" fill="#3a2fae" stroke="#3f9be6" stroke-width="4" />
            <path d="M690 507q-5 2-3 9" stroke="#e2405a" stroke-width="2" fill="none" />
            <path d="M445 275L893 289M445 287L893 302" stroke="#f00d0d" stroke-width="3.500" stroke-dasharray="16 1" />
            <path d="M445 275L437 590" stroke="#0f0fe8" stroke-width="3" />
            <path d="M438 586L432 842" stroke="#f8c10c" stroke-width="4" />
            <path d="M437 640L433 796" stroke="#1c1cb4" stroke-width="3" stroke-dasharray="12 8 3 4" />
            <path d="M890 492h4v21h-4z" fill="#3bd0c6" />
            <path d="M150 925h27v38h-28z" fill="#a9a9a9" />
            <path d="M133 950h45" stroke="#b23a44" stroke-width="2" /><path d="M133 950l12-3v6z" fill="#d9303c" />
            <path d="M178 950v-36" stroke="#1440c8" stroke-width="2" /><path d="M174 921l4-12 4 12z" fill="#1440c8" />
            <path d="M178 955v18M175 966l3 8 3-8z" stroke="#2f8f3a" fill="#2f8f3a" />
            <circle cx="178" cy="950" r="3.500" fill="#fff" />
            <text x="121" y="954" font-family="Liberation Sans" font-size="12" fill="#c23440">X</text>
            <text x="174" y="910" font-family="Liberation Sans" font-size="12" fill="#2a46b8">Z</text>
          </svg>
          <p class="overlay">学编程加QQ591841940</p>
        </div>

        <div class="vbar">
          <button v-for="(t, i) in sideTools" :key="i" :aria-label="t"><svg viewBox="0 0 28 28" v-html="icons[t]" /></button>
          <button aria-label="车间文档"><svg viewBox="0 0 28 28" v-html="icons.doc" /></button>
          <button aria-label="时间"><svg viewBox="0 0 28 28" v-html="icons.toolclock" /></button>
          <i class="tri" />
        </div>

        <aside class="navigator">
          <h2><i />工序导航器 - 程序顺序</h2>
          <div class="grid">
            <div class="rows">
              <table>
                <colgroup><col><col class="c2"><col class="c3"><col class="c4"><col class="c5"></colgroup>
                <thead><tr><th>名称</th><th>换刀</th><th>刀轨</th><th>刀具</th><th>余量</th></tr></thead>
                <tbody>
                  <tr v-for="r in treeRows" :key="r.label" :class="{ purple: r.purple }">
                    <td>
                      <div class="cell" :class="'lv' + r.level">
                        <b v-if="r.box" class="box">{{ r.box === '+' ? '+' : '−' }}</b>
                        <i v-else-if="r.level" class="dots" />
                        <svg v-if="r.mark" class="mark" viewBox="0 0 28 28" v-html="icons[r.mark]" />
                        <svg v-if="r.icon" viewBox="0 0 28 28" v-html="icons[r.icon]" />
                        <span>{{ r.label }}</span>
                      </div>
                    </td>
                    <td><svg v-if="r.purple" viewBox="0 0 28 28" v-html="icons.cutter" /></td>
                    <td><svg v-if="r.purple" viewBox="0 0 28 28" v-html="icons.check" /></td>
                    <td>{{ r.purple ? 'T_CUTTER' : '' }}</td>
                    <td>{{ r.purple ? '0.0000' : '' }}</td>
                  </tr>
                  <tr v-for="n in emptyRows" :key="n"><td /><td /><td /><td /><td /></tr>
                </tbody>
              </table>
            </div>
            <div class="hscroll"><span class="chev l" /><i class="thumb" /><span class="chev r" /></div>
          </div>
          <div class="splitline"><i /></div>
        </aside>

        <div class="tabstrip">
          <button class="gearbtn" aria-label="资源条选项"><svg viewBox="0 0 28 28" v-html="icons.gear" /></button>
          <button v-for="s in sideTabs" :key="s.icon" class="stab" :class="{ gap: s.gap, active: s.active }" :aria-label="s.label"><svg viewBox="0 0 28 28" v-html="icons[s.icon]" /></button>
        </div>
      </section>

      <div class="bar bottom">
        <i class="grip" />
        <span class="sel zoomsel"><select aria-label="缩放"><option>200</option></select><b><i /></b></span>
        <template v-for="(t, i) in bar4" :key="i">
          <i v-if="t === ':'" class="grip" />
          <i v-else-if="t === '|'" class="sep" />
          <button v-else-if="t === 'v' || t === 'w'" class="drop" :class="{ low: t === 'w' }" aria-label="更多"><i /></button>
          <button v-else class="tool" :aria-label="t"><svg viewBox="0 0 28 28" v-html="icons[t]" /></button>
        </template>
      </div>

      <footer class="status">
        <span class="msg">选择刀轨事件以定位刀具，或使用“播放”启动重播</span>
        <span class="cue">CAM 刀轨索引</span>
        <i class="cellbox small" />
        <span class="cellbox"><svg viewBox="0 0 16 16"><path d="M1 4V1h3M12 1h3v3M15 12v3h-3M4 15H1v-3" fill="none" stroke="#444" /><path d="M4 4h8v7H4z" fill="#3a7fd8" stroke="#244c86" /></svg></span>
        <i class="cellbox last" />
      </footer>
    </main>

    <section class="dialog" role="dialog" aria-label="刀轨可视化">
      <header>
        <svg viewBox="0 0 28 28" v-html="icons.gear" />
        <h2>刀轨可视化</h2>
        <button aria-label="关闭"><svg viewBox="0 0 16 16"><path d="M3 3l10 10M13 3L3 13" stroke="#fff" stroke-width="3.500" /></svg></button>
      </header>
      <div class="body">
        <div class="listbox">
          <ul role="listbox" aria-label="刀轨事件">
            <li v-for="(g, i) in gotoLines" :key="i" role="option" :aria-selected="i === selected" :class="{ on: i === selected }" @click="selected = i">{{ g }}</li>
          </ul>
          <div class="vscroll"><span class="chev u" /><i class="thumb" /><span class="chev d" /></div>
          <div class="hscroll"><span class="chev l" /><i class="thumb" /><span class="chev r" /></div>
        </div>
        <p class="val">{{ frame }}</p>
        <input v-model="frame" type="range" min="1" max="31" aria-label="运动">
        <p class="ends"><span>1</span><span>31</span></p>
        <p class="feed">进给率 0.000000</p>
        <div class="tabs" role="tablist">
          <button v-for="(t, i) in tabs" :key="t" role="tab" :class="{ on: i === activeTab }" @click="activeTab = i">{{ t }}</button>
        </div>
        <div class="panel">
          <h3>显示选项</h3>
          <div class="row"><label for="s1">刀具</label><span class="sel short"><select id="s1"><option>刀具</option></select><b><i /></b></span></div>
          <label class="chk first"><input type="checkbox" disabled>2D 除料</label>
          <label class="chk"><input type="checkbox" disabled>显示上一个 IPW</label>
          <hr>
          <h3 class="mid">运动显示</h3>
          <div class="row"><label for="s2">刀轨</label><span class="sel long"><select id="s2"><option>全部</option></select><b><i /></b></span></div>
          <div class="row"><label for="s3">刀具追踪</label><span class="sel short"><select id="s3"><option>刀尖</option></select><b><i /></b></span></div>
          <div class="row off"><label for="s4">运动数</label><input id="s4" type="text" value="10" disabled></div>
          <label class="chk"><input type="checkbox" disabled>在每一层暂停</label>
          <label class="chk"><input type="checkbox" disabled>显示刀具接触</label>
          <hr>
          <button class="btn full">过切和碰撞设置</button>
        </div>
        <p class="feed speedlabel">动画速度</p>
        <p class="val endval">{{ speed }}</p>
        <input v-model="speed" type="range" min="1" max="10" aria-label="动画速度">
        <p class="ends"><span>1</span><span>10</span></p>
        <div class="players">
          <button v-for="p in players" :key="p.d" :aria-label="p.label" :disabled="p.off"><svg viewBox="0 0 28 28" v-html="icons[p.d]" /></button>
        </div>
        <hr class="wide">
        <div class="actions"><button class="btn ok">确定</button><button class="btn">取消</button></div>
      </div>
    </section>

    <div class="activate"><b>激活 Windows</b><span>转到“设置”以激活 Windows。</span></div>
  </div>
</template>

<style>
html, body { margin: 0; height: 100%; }
#app { height: 100%; }
</style>

<style scoped>
* { box-sizing: border-box; }
.desktop {
  position: relative; display: flex; height: 100%; min-height: 1000px; overflow: hidden; padding: 0 104px;
  background: linear-gradient(to right, transparent 50%, #e4e4e4 50%, #d8d8d8 95%, #e9e9e9), linear-gradient(#8a8a8a, #6c6c6c 16%, #424242 34%, #3d4648 48%, #44586c 62%, #52606c 76%, #777 88%, #8a8a8a);
  font: 13px/20px "Noto Sans", "Noto Sans CJK SC", sans-serif; color: #1c1c1c;
}
button { margin: 0; padding: 0; border: 0; background: none; font: inherit; color: inherit; }
select, input { margin: 0; font: inherit; color: inherit; }
p, h1, h2, h3, ul { margin: 0; padding: 0; font: inherit; list-style: none; }
svg { display: block; flex: none; }
.window { flex: 1; min-width: 0; display: flex; flex-direction: column; background: #dadada; border: solid #17181a; border-width: 0 3px 0 5px; }

.titlebar { display: flex; align-items: center; height: 32px; padding: 2px 1px 0 3px; color: #f0f0f0; border-top: 1px solid #9b9b9b; background: linear-gradient(#6a6a6a, #565656 9px, #1a1a1b 9px, #1a1a1b); }
.logo { width: 20px; height: 20px; }
.titlebar h1 { margin-left: 3px; font-size: 14px; flex: 1; white-space: nowrap; }
.brand { font: bold 15px/20px "Noto Sans", sans-serif; color: #fff; margin-right: 28px; }
.winbtns, .mdi { display: flex; gap: 4px; }
.winbtns button { width: 21px; height: 22px; border: 1px solid #6b6b6b; border-radius: 3px; background: linear-gradient(#777, #444 50%, #333 50%, #444); }
.winbtns .red { background: linear-gradient(#f0907e, #dd4433 50%, #c92a1a 50%, #ee6a50); }
.winbtns svg { width: 19px; height: 19px; }

.menubar { display: flex; align-items: center; gap: 16px; height: 32px; padding: 0 2px 3px 8px; background: linear-gradient(#e9e9e9, #e0e0e0); white-space: nowrap; }
.menuicon { width: 18px; height: 18px; margin-right: -8px; }
.menubar .spaced { margin-left: 11px; }
.mdi { margin-left: auto; padding-top: 3px; }
.mdi button { width: 18px; height: 18px; border: 1px solid #777; border-radius: 4px; background: #f1f1f1; }
.mdi button:disabled { border-color: #c4c4c4; }

.bar { display: flex; align-items: center; height: 38px; padding-left: 4px; border-top: 1px solid #f8f8f8; background: linear-gradient(#e2e2e2, #d4d4d4); }
.bar.second { border-bottom: 2px solid #949494; height: 39px; }
.bar.third { height: 36px; padding: 0 4px 4px 6px; background: linear-gradient(#cfcfcf, #dedede); border: 0; border-bottom: 1px solid #f2f2f2; }
.bar .grip { flex: none; width: 6px; height: 28px; background: radial-gradient(circle, #8d8d8d 1px, transparent 1px) 0 0 / 4px 4px repeat-y; }
.bar .sep { flex: none; width: 8px; height: 34px; background: linear-gradient(to right, transparent 3px, #b5b5b5 3px, #b5b5b5 4px, #fafafa 4px, #fafafa 5px, transparent 5px); }
.bar .behind { flex: 0 0 331px; }
.tool { flex: none; width: 34px; height: 30px; display: flex; align-items: center; justify-content: center; }
.tool svg { width: 27px; height: 27px; overflow: visible; }
.drop { flex: none; width: 14px; height: 30px; display: flex; align-items: center; justify-content: center; }
.drop i, .start i { width: 0; border: 3px solid transparent; border-top: 4px solid #111; border-bottom: 0; }
.drop.low { align-items: flex-end; padding-bottom: 3px; }
.second .drop, .third .drop { width: 18px; }
.start { display: flex; align-items: center; gap: 4px; width: 73px; }
.start svg { width: 28px; height: 28px; }
.search { display: flex; align-items: center; flex: none; width: 159px; height: 27px; border: 1px solid #9e9e9e; background: #fff; }
.search input { flex: 1; min-width: 0; border: 0; background: none; padding: 0 4px; outline: 0; }
.search input::placeholder { color: #888; }
.search svg { width: 18px; height: 18px; margin-right: 4px; }

.third .tool { width: 32px; }
.dimsel { display: grid; height: 25px; border: 1px solid; border-color: #999 #fff #fff #999; border-radius: 4px; }
.dimsel select, .dimsel > i { grid-area: 1 / 1; }
.dimsel select { appearance: none; border: 0; width: 100%; background: #d2d2d2; padding: 0 3px; color: #a0a0a0; opacity: 1; border-radius: 4px; text-shadow: 1px 1px #f4f4f4; }
.dimsel > i { justify-self: end; width: 19px; background: linear-gradient(#fafafa, #e4e4e4); border: 1px solid #bbb; border-radius: 0 3px 3px 0; position: relative; }
.dimsel > i::after { content: ""; position: absolute; left: 3px; top: 8px; border: 6px solid transparent; border-top: 7px solid #9b9b9b; border-bottom: 0; }
.type { width: 163px; margin-right: 9px; }
.scope { width: 171px; margin-right: 6px; }
.face { width: 532px; margin: 0 6px 0 3px; }
.third .end { margin-left: auto; width: 14px; }

.work { flex: 1; min-height: 0; display: flex; background: #dcdcdc; }
.viewport { flex: 1; min-width: 0; position: relative; background: #333; }
.scene { width: 100%; height: 100%; }
.overlay { position: absolute; left: 7px; top: 0; font: bold 51px/52px "Noto Sans CJK SC", sans-serif; color: #fff; white-space: nowrap; text-shadow: 2px 2px 1px #000, 0 0 2px #000; }
.vbar { width: 36px; display: flex; flex-direction: column; justify-content: flex-end; gap: 10px; overflow: hidden; padding: 0 0 12px 4px; background: linear-gradient(to right, #e8e8e8, #d6d6d6); }
.vbar button { flex: none; height: 28px; }
.vbar svg { width: 26px; height: 26px; }
.tri { border: 4px solid transparent; border-right: 5px solid #111; border-left: 0; width: 0; margin: -5px 0 0 5px; }

.navigator { width: 517px; display: flex; flex-direction: column; padding: 0 7px 0 13px; background: #ededed; border-top: 1px solid #8c8c8c; border-right: 1px solid #c8c8c8; border-bottom: 1px solid #777; }
.navigator h2 { display: flex; align-items: center; gap: 14px; height: 32px; padding: 0 0 2px 3px; font-weight: 600; }
.navigator h2 i { width: 14px; height: 14px; border: 1px solid #111; border-top-width: 2px; }
.grid { flex: 1; min-height: 0; display: flex; flex-direction: column; border: 1px solid #7a7a7a; background: #f0f0f0; }
.rows { flex: 1; min-height: 0; overflow: hidden; }
table { width: 100%; border-collapse: separate; border-spacing: 0; table-layout: fixed; font-size: 14px; }
.c2 { width: 54px; } .c3 { width: 58px; } .c4 { width: 90px; } .c5 { width: 44px; }
th { height: 25px; padding: 0 6px; font-weight: 400; font-size: 13px; text-align: left; background: linear-gradient(#f2f2f2, #e4e4e4 55%, #d6d6d6); border-bottom: 1px solid #8d8d8d; border-right: 1px solid #bdbdbd; }
td { height: 22px; padding: 0 4px; line-height: 20px; overflow: hidden; white-space: nowrap; border-bottom: 1px solid #e3e3e3; border-right: 1px solid #dedede; background: #fff; color: #333; }
td:first-child { border-right: 1px solid #222; }
td svg { width: 16px; height: 16px; }
tbody tr:nth-child(even) td { background: #f5f5f5; }
tr.purple td { color: #7a4fc4; }
.cell { display: flex; align-items: center; gap: 3px; }
.cell .mark { margin-right: -2px; }
.lv2 { padding-left: 20px; }
.cell .dots { flex: none; width: 13px; height: 10px; border: dotted #aaa; border-width: 0 0 1px 1px; margin: -10px 0 0 5px; }
.box { flex: none; width: 11px; height: 11px; margin-right: 7px; border: 1px solid #777; border-radius: 2px; background: #fff; font: 12px/9px "Liberation Sans", sans-serif; text-align: center; }
.hscroll { display: flex; align-items: center; height: 18px; background: #f0f0f0; }
.hscroll .thumb { height: 16px; background: #cdcdcd; }
.grid .thumb { width: 52%; }
.chev { flex: none; width: 18px; display: flex; justify-content: center; }
.chev::after { content: ""; width: 6px; height: 6px; border: solid #555; border-width: 2px 0 0 2px; transform: rotate(-45deg); }
.chev.u::after { transform: rotate(45deg); }
.chev.d::after { transform: rotate(225deg); }
.chev.r { margin-left: auto; }
.chev.r::after { transform: rotate(135deg); }
.splitline { height: 19px; padding-top: 6px; background: linear-gradient(#a2a2a2, #a2a2a2) 0 7px / 100% 1px no-repeat; }
.splitline i { display: block; width: 92px; height: 4px; margin: 0 auto; background: #c9c9c9; border-bottom: 1px solid #999; }

.tabstrip { width: 32px; display: flex; flex-direction: column; align-items: flex-start; gap: 2px; background: #a9a9a9; }
.gearbtn { align-self: center; height: 48px; padding-bottom: 16px; flex: none; color: #222; }
.gearbtn svg { width: 15px; height: 15px; }
.stab { flex: none; width: 28px; height: 44px; border: 1px solid #777; border-left: 0; border-radius: 0 4px 4px 0; background: #dadada; }
.stab.gap { margin-top: 13px; }
.stab.active { width: 31px; height: 48px; background: #efefef; }
.stab svg { width: 26px; height: 28px; }

.bottom { height: 39px; border-bottom: 1px solid #bbb; }
.bottom .tool { width: 33px; }
.bottom .tool svg { width: 26px; height: 26px; }
.status { display: flex; align-items: center; height: 21px; padding-left: 3px; border-top: 1px solid #f4f4f4; background: #dbdbdb; font-weight: 600; white-space: nowrap; }
.msg { width: 801px; }
.cue { flex: 1; }
.cellbox { height: 20px; width: 62px; padding: 2px 4px; border-left: 1px solid #f8f8f8; }
.cellbox svg { width: 16px; height: 16px; }
.cellbox.small { width: 22px; } .cellbox.last { width: 17px; }

.sel { display: grid; height: 25px; border: 1px solid #555; border-radius: 4px; background: #fff; overflow: hidden; }
.sel select, .sel > b { grid-area: 1 / 1; }
.sel select { appearance: none; border: 0; padding: 0 3px; background: none; outline: 0; }
.sel > b { justify-self: end; width: 19px; display: flex; align-items: center; justify-content: center; background: linear-gradient(#426ca8, #9cc4ee 40%, #6fa6de 60%, #a9d6f8); pointer-events: none; }
.sel > b i { border: 5px solid transparent; border-top: 7px solid #111; border-bottom: 0; }
.short { width: 55px; } .long { width: 148px; }
.zoomsel { width: 58px; margin: 0 4px 0 2px; font-size: 14px; }
.zoomsel select { padding: 0 2px; }

.dialog { position: absolute; left: 893px; top: 8px; width: 362px; border: solid #111; border-width: 0 0 9px; border-radius: 7px; background: #ebebeb; }
.dialog header { display: flex; align-items: center; height: 24px; padding: 0 5px 2px 4px; border-radius: 7px 7px 0 0; color: #fff; background: linear-gradient(#5c5c5c, #3a3a3a 7px, #151515 8px, #1d1d1d); }
.dialog header > svg { width: 16px; height: 16px; margin-right: 3px; }
.dialog header h2 { flex: 1; padding-left: 9px; border-left: 1px solid #bbb; font-weight: 600; }
.dialog header button { padding-left: 3px; border-left: 1px solid #999; }
.dialog header button svg { width: 16px; height: 20px; }
.body { display: flex; flex-direction: column; padding: 8px 12px 14px 10px; border: solid #9c9c9c; border-width: 0 1px; }
.listbox { display: grid; grid-template: 119px 18px / 1fr 18px; margin: 0 0 1px 2px; border: 1px solid #666; background: #fff; }
.listbox ul { padding-left: 1px; overflow: hidden; font-size: 14px; line-height: 19px; white-space: nowrap; }
.listbox .hscroll { grid-column: 1 / 3; padding-right: 20px; }
.listbox .hscroll .thumb { width: 144px; height: 17px; }
.listbox li { color: #222; }
.listbox li.on { background: #0a78d7; color: #c8e6ff; }
.vscroll { display: flex; flex-direction: column; align-items: center; background: #f0f0f0; padding: 8px 0; }
.vscroll .thumb { width: 17px; height: 53px; margin-top: 5px; background: #cdcdcd; }
.chev.d { margin-top: auto; }
.val { margin: 3px 8px 4px 10px; }
.endval { text-align: right; margin-right: 4px; }
input[type="range"] { appearance: none; width: auto; height: 22px; margin: 0 6px 2px 8px; background: none; }
input[type="range"]::-webkit-slider-runnable-track { height: 2px; background: linear-gradient(#8c8c8c, #8c8c8c 1px, #fff 1px); }
input[type="range"]::-webkit-slider-thumb { appearance: none; width: 13px; height: 22px; margin-top: -10px; border: 2px solid #33698f; border-radius: 7px 7px 3px 3px; background: linear-gradient(#e8f6ff, #a8dbf8 55%, #5cc6ee 60%, #6fd8f6); }
.ends { display: flex; justify-content: space-between; padding: 0 0 0 6px; }
.feed { margin: 5px 0 4px -1px; }
.tabs { display: flex; gap: 2px; height: 27px; align-items: flex-end; }
.tabs button { height: 25px; padding: 0 6px; border: 1px solid #777; border-bottom: 0; border-radius: 4px 4px 0 0; background: linear-gradient(#e6e6e6, #d4d4d4 50%, #c4c4c4 52%, #cfcfcf); }
.tabs button.on { height: 28px; width: 57px; margin: 0 -2px -1px 0; background: #ebebeb; z-index: 1; }
.tabs button:last-child { padding: 0 12px; }
.panel { height: 406px; padding: 9px 8px 0 6px; border: 1px solid #777; border-right-width: 2px; border-bottom-width: 2px; background: linear-gradient(#ebebeb 80%, #dedede); box-shadow: 1px 1px #fff; }
.row { display: flex; align-items: center; justify-content: space-between; height: 25px; margin-top: 4px; }
.chk { display: flex; align-items: center; gap: 3px; height: 25px; color: #999; text-shadow: 1px 1px #fff; }
.chk.first { margin-top: 4px; }
.chk input { appearance: none; width: 17px; height: 17px; border: 1px solid #aaa; border-radius: 2px; background: linear-gradient(#f4f4f4, #e2e2e2); box-shadow: inset 0 0 0 1px #f8f8f8; }
.panel hr, .wide { width: 100%; height: 2px; margin: 2px 0 4px; border: 0; background: linear-gradient(#b4b4b4 1px, #fff 1px); }
.off { color: #999; margin-bottom: 2px; }
.mid { margin-bottom: 6px; }
.off input { width: 89px; height: 25px; border: 1px solid #999; border-radius: 3px; background: #cfcfcf; text-align: right; padding: 0 4px; font-size: 16px; color: #888; }
.btn { height: 26px; width: 59px; border: 1px solid #555; border-top: 2px solid #666; border-radius: 4px; background: linear-gradient(#f6f6f6, #d6d6d6 50%, #c8c8c8 52%, #f2f2f2); }
.btn.full { width: 100%; height: 29px; }
.btn.ok { background: linear-gradient(#c9f2bb, #86d673 50%, #63c24d 52%, #a6f08f); }
.speedlabel { margin-top: 6px; }
.endval { margin-top: 0; }
.players { display: flex; justify-content: center; gap: 4px; margin: 5px 0 8px; }
.players button { width: 34px; height: 34px; border: 2px solid #6b6b6b; border-radius: 4px; background: linear-gradient(#fbfbfb, #e0e0e0 50%, #d2d2d2 52%, #f0f0f0); }
.players button:disabled { border-color: #c6c6c6; background: #ededed; }
.players svg { width: 30px; height: 28px; }
.wide { margin: 0 0 5px; }
.actions { display: flex; justify-content: flex-end; gap: 7px; padding-right: 5px; }

.activate { position: absolute; left: 1516px; top: 1002px; display: flex; flex-direction: column; gap: 2px; color: #a6a6a6; font-size: 16px; line-height: 24px; pointer-events: none; }
.activate b { font-weight: 400; font-size: 22px; }
</style>
